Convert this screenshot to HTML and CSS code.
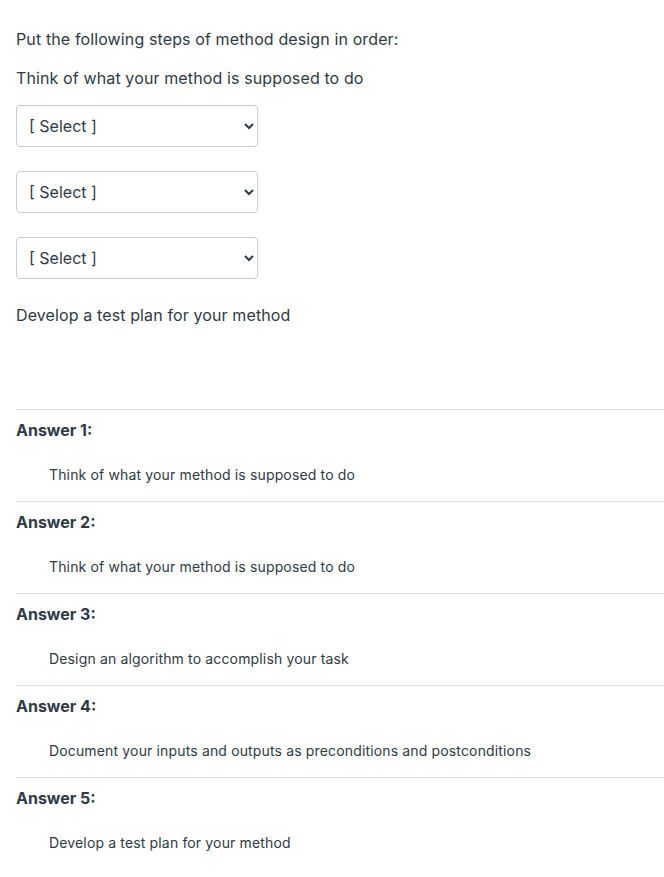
FILE: index.html
```html
<!DOCTYPE html>
<html lang="en">
<head>
    <meta charset="UTF-8">
    <meta name="viewport" content="width=device-width, initial-scale=1.0">
    <title>Quiz Question</title>
    <link rel="stylesheet" href="styles.css">
</head>
<body>
    <div class="question">
        <p class="question-text">Put the following steps of method design in order:</p>
        <p class="question-text">Think of what your method is supposed to do</p>
        <div class="select-wrap">
            <select>
                <option>[ Select ]</option>
            </select>
        </div>
        <div class="select-wrap">
            <select>
                <option>[ Select ]</option>
            </select>
        </div>
        <div class="select-wrap">
            <select>
                <option>[ Select ]</option>
            </select>
        </div>
        <p class="question-text">Develop a test plan for your method</p>
    </div>

    <div class="answers">
        <div class="answer">
            <div class="answer-label">Answer 1:</div>
            <div class="answer-text">Think of what your method is supposed to do</div>
        </div>
        <div class="answer">
            <div class="answer-label">Answer 2:</div>
            <div class="answer-text">Think of what your method is supposed to do</div>
        </div>
        <div class="answer">
            <div class="answer-label">Answer 3:</div>
            <div class="answer-text">Design an algorithm to accomplish your task</div>
        </div>
        <div class="answer">
            <div class="answer-label">Answer 4:</div>
            <div class="answer-text">Document your inputs and outputs as preconditions and postconditions</div>
        </div>
        <div class="answer">
            <div class="answer-label">Answer 5:</div>
            <div class="answer-text">Develop a test plan for your method</div>
        </div>
    </div>
</body>
</html>
```

FILE: styles.css
```css
body {
    margin: 0;
    padding: 27px 0 0 16px;
    background-color: #ffffff;
    color: #2d3b45;
    font-family: Inter, "Liberation Sans", sans-serif;
    letter-spacing: 0.12px;
}

.question-text {
    margin: 0 0 15px 0;
    font-size: 16px;
    line-height: 24px;
}

.select-wrap {
    margin-bottom: 24px;
}

.select-wrap select {
    width: 242px;
    height: 42px;
    padding: 0 8px;
    font-family: Inter, "Liberation Sans", sans-serif;
    font-size: 16px;
    letter-spacing: 0;
    color: #2d3b45;
    background-color: #ffffff;
    border: 1px solid #c7cdd1;
    border-radius: 4px;
}

/* answer list under the question */
.answers {
    margin-top: 82px;
}

.answer {
    border-top: 1px solid #dddddd;
    padding: 8px 0 16px 0;
}

.answer-label {
    font-size: 16px;
    font-weight: bold;
    line-height: 24px;
    letter-spacing: 0;
}

.answer-text {
    margin-top: 23px;
    padding-left: 33px;
    font-size: 14px;
    line-height: 20px;
    letter-spacing: 0.15px;
}
```
